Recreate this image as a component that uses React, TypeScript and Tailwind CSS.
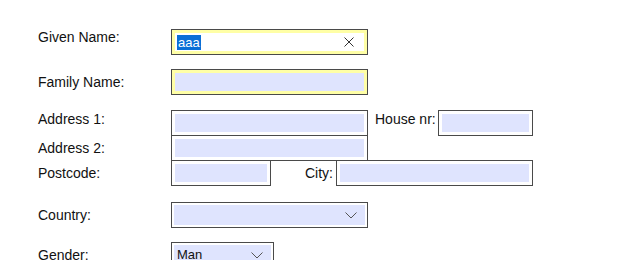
import React from 'react'

const font = { fontFamily: '"Liberation Sans", Arial, sans-serif' }

function Chevron() {
  return (
    <svg width="12" height="7" viewBox="0 0 12 7" className="shrink-0">
      <path d="M0.5 0.5 L6 6 L11.5 0.5" fill="none" stroke="#555" strokeWidth="1" />
    </svg>
  )
}

function Field({ w, ring = 'white', className = '', children }: { w: string; ring?: 'white' | 'yellow'; className?: string; children?: React.ReactNode }) {
  return (
    <div className={`${w} h-[26px] border border-[#4a4a4a] p-[3px] ${ring === 'yellow' ? 'bg-[#ffffa6]' : 'bg-white'} ${className}`}>
      <div className="h-full w-full bg-[#dfe4fe]">{children}</div>
    </div>
  )
}

export default function App() {
  return (
    <div className="w-[629px] h-[260px] overflow-hidden bg-white text-[14px] text-[#111]" style={font}>
      <div className="pl-[38px] pt-[29px] flex flex-col">
        {/* given name */}
        <div className="flex items-start">
          <div className="w-[133px] leading-4">Given Name:</div>
          <div className="w-[197px] h-[26px] border border-[#4a4a4a] p-[3px] bg-[#ffffa6]">
            <div className="h-full w-full bg-white flex items-center pl-[2px] pr-[10px]">
              <span className="bg-[#0a6fd6] text-white text-[13px] leading-[15px] px-px">aaa</span>
              <div className="flex-1" />
              <svg width="10" height="10" viewBox="0 0 10 10">
                <path d="M0.5 0.5 L9.5 9.5 M9.5 0.5 L0.5 9.5" stroke="#333" strokeWidth="1" />
              </svg>
            </div>
          </div>
        </div>

        {/* family name */}
        <div className="flex items-center mt-[14px]">
          <div className="w-[133px] leading-4">Family Name:</div>
          <Field w="w-[197px]" ring="yellow" />
        </div>

        {/* address 1 */}
        <div className="flex items-start mt-[15px]">
          <div className="w-[133px] leading-4 mt-px">Address 1:</div>
          <Field w="w-[197px]" />
          <div className="w-[70px] pl-[7px] leading-4 mt-px">House nr:</div>
          <Field w="w-[95px]" />
        </div>

        {/* address 2 */}
        <div className="flex items-center -mt-px">
          <div className="w-[133px] leading-4">Address 2:</div>
          <Field w="w-[197px]" />
        </div>

        {/* postcode / city */}
        <div className="flex items-center -mt-px">
          <div className="w-[133px] leading-4">Postcode:</div>
          <Field w="w-[100px]" />
          <div className="w-[65px] text-right pr-[3px] leading-4">City:</div>
          <Field w="w-[197px]" />
        </div>

        {/* country */}
        <div className="flex items-center mt-[16px]">
          <div className="w-[133px] leading-4">Country:</div>
          <div className="w-[197px] h-[26px] border border-[#4a4a4a] p-[2px] bg-white">
            <div className="h-full w-full bg-[#dfe4fe] flex items-center justify-end pr-[8px]">
              <Chevron />
            </div>
          </div>
        </div>

        {/* gender */}
        <div className="flex items-start mt-[14px]">
          <div className="w-[133px] leading-4 mt-[5px]">Gender:</div>
          <div className="w-[103px] h-[26px] border border-[#4a4a4a] p-[2px] bg-white">
            <div className="h-full w-full bg-[#dfe4fe] flex items-center pl-[3px] pr-[8px]">
              <span className="text-[13px] leading-4">Man</span>
              <div className="flex-1" />
              <Chevron />
            </div>
          </div>
        </div>
      </div>
    </div>
  )
}
